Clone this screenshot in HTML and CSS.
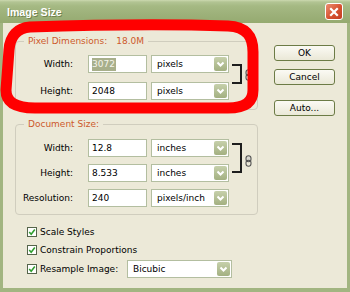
FILE: index.html
```html
<!DOCTYPE html>
<html lang="en">
<head>
<meta charset="utf-8">
<title>Image Size</title>
<link rel="stylesheet" href="styles.css">
</head>
<body>
<div class="window">
  <div class="titlebar">
    <span class="title">Image Size</span>
    <span class="close"><svg width="10" height="10" viewBox="0 0 10 10"><path d="M2 2L8 8M8 2L2 8" stroke="#fff" stroke-width="2.2" stroke-linecap="square" fill="none"/></svg></span>
  </div>
  <div class="frame">
    <div class="main">
      <fieldset class="group g1">
        <legend>Pixel Dimensions:<span class="mp">18.0M</span></legend>
        <div class="gbody">
          <div class="rows">
            <div class="row"><span class="lbl">Width:</span><div class="field"><span class="hl">3072</span></div><div class="combo"><span>pixels</span><span class="drop"><svg width="9" height="7" viewBox="0 0 9 7"><path d="M1.5 1.5L4.5 4.5L7.5 1.5" stroke="#fff" stroke-width="2" fill="none"/></svg></span></div></div>
            <div class="row"><span class="lbl">Height:</span><div class="field"><span>2048</span></div><div class="combo"><span>pixels</span><span class="drop"><svg width="9" height="7" viewBox="0 0 9 7"><path d="M1.5 1.5L4.5 4.5L7.5 1.5" stroke="#fff" stroke-width="2" fill="none"/></svg></span></div></div>
          </div>
          <div class="link">
            <span class="bracket"></span>
            <svg class="chain" width="7" height="12" viewBox="0 0 7 12"><rect x="1" y="0.7" width="5" height="6" rx="2.5" fill="#d8d8d0" stroke="#555" stroke-width="1.1"/><rect x="1" y="5.3" width="5" height="6" rx="2.5" fill="none" stroke="#555" stroke-width="1.1"/></svg>
          </div>
        </div>
      </fieldset>
      <fieldset class="group g2">
        <legend>Document Size:</legend>
        <div class="gbody">
          <div class="rows">
            <div class="row"><span class="lbl">Width:</span><div class="field"><span>12.8</span></div><div class="combo"><span>inches</span><span class="drop"><svg width="9" height="7" viewBox="0 0 9 7"><path d="M1.5 1.5L4.5 4.5L7.5 1.5" stroke="#fff" stroke-width="2" fill="none"/></svg></span></div></div>
            <div class="row"><span class="lbl">Height:</span><div class="field"><span>8.533</span></div><div class="combo"><span>inches</span><span class="drop"><svg width="9" height="7" viewBox="0 0 9 7"><path d="M1.5 1.5L4.5 4.5L7.5 1.5" stroke="#fff" stroke-width="2" fill="none"/></svg></span></div></div>
            <div class="row"><span class="lbl">Resolution:</span><div class="field"><span>240</span></div><div class="combo"><span>pixels/inch</span><span class="drop"><svg width="9" height="7" viewBox="0 0 9 7"><path d="M1.5 1.5L4.5 4.5L7.5 1.5" stroke="#fff" stroke-width="2" fill="none"/></svg></span></div></div>
          </div>
          <div class="link">
            <span class="bracket"></span>
            <svg class="chain" width="7" height="12" viewBox="0 0 7 12"><rect x="1" y="0.7" width="5" height="6" rx="2.5" fill="#d8d8d0" stroke="#555" stroke-width="1.1"/><rect x="1" y="5.3" width="5" height="6" rx="2.5" fill="none" stroke="#555" stroke-width="1.1"/></svg>
          </div>
        </div>
      </fieldset>
      <div class="checks">
        <div class="check"><span class="box"><svg width="8" height="8" viewBox="0 0 8 8"><path d="M1.2 4L3.2 6.2L6.8 1.6" stroke="#2f9e2f" stroke-width="1.6" fill="none"/></svg></span><span>Scale Styles</span></div>
        <div class="check"><span class="box"><svg width="8" height="8" viewBox="0 0 8 8"><path d="M1.2 4L3.2 6.2L6.8 1.6" stroke="#2f9e2f" stroke-width="1.6" fill="none"/></svg></span><span>Constrain Proportions</span></div>
        <div class="check resample"><span class="box"><svg width="8" height="8" viewBox="0 0 8 8"><path d="M1.2 4L3.2 6.2L6.8 1.6" stroke="#2f9e2f" stroke-width="1.6" fill="none"/></svg></span><span class="rlabel">Resample Image:</span><div class="combo wide"><span>Bicubic</span><span class="drop"><svg width="9" height="7" viewBox="0 0 9 7"><path d="M1.5 1.5L4.5 4.5L7.5 1.5" stroke="#fff" stroke-width="2" fill="none"/></svg></span></div></div>
      </div>
    </div>
    <div class="buttons">
      <div class="btn ok">OK</div>
      <div class="btn cancel">Cancel</div>
      <div class="btn auto">Auto...</div>
    </div>
  </div>
</div>
<svg class="annot" width="350" height="292" viewBox="0 0 350 292">
  <path d="M30 27 C90 25 170 24 228 26 C248 27 253 38 253 52 L253 90 C253 102 245 108 228 108 L35 108 C15 108 6 102 6 90 L9 50 C10 35 18 28 30 27 Z" fill="none" stroke="#ff0000" stroke-width="11" stroke-linejoin="round"/>
</svg>
</body>
</html>
```
FILE: styles.css
```css
body {
  margin: 0;
  width: 350px;
  height: 292px;
  position: relative;
  overflow: hidden;
  font-family: "DejaVu Sans", sans-serif;
  font-size: 9px;
  color: #000;
  background: #ECE9D8;
}

.window {
  display: flex;
  flex-direction: column;
  width: 350px;
  height: 292px;
}

.titlebar {
  height: 23px;
  flex: none;
  display: flex;
  align-items: center;
  justify-content: space-between;
  padding: 0 7px 0 7px;
  background: linear-gradient(#CCD9B0 0, #B2C493 2px, #A5B983 6px, #9DB17A 14px, #95AA70 23px);
}

.title {
  font-family: "Liberation Sans", Arial, sans-serif;
  font-weight: bold;
  font-size: 10.6px;
  color: #fff;
  text-shadow: 1px 1px 0 #72834F;
}

.close {
  width: 18px;
  height: 17px;
  box-sizing: border-box;
  border: 1px solid #fff;
  border-radius: 3px;
  background: linear-gradient(135deg, #EC8E72, #D6512F 55%, #C43E24);
  display: flex;
  align-items: center;
  justify-content: center;
}

.frame {
  flex: 1;
  display: flex;
  background: #ECE9D8;
  border: solid #A2B581;
  border-width: 0 3px 4px;
  padding: 12px 12px 0;
}

.main {
  width: 243px;
  flex: none;
}

.group {
  margin: 0;
  width: 243px;
  box-sizing: border-box;
  min-width: 0;
  padding: 8px 4px 9px;
  border: 1px solid #D0CDBE;
  border-radius: 4px;
}

.g2 {
  margin-top: 8px;
  padding-top: 9px;
  padding-bottom: 7px;
}

legend {
  font-size: 9px;
  line-height: 12px;
  color: #CD5A2C;
  padding: 0 4px;
  margin-left: 4px;
}

.mp {
  margin-left: 9px;
}

.gbody {
  display: flex;
}

.rows {
  display: flex;
  flex-direction: column;
  gap: 9px;
}

.g2 .rows {
  gap: 7px;
}

.row {
  display: flex;
  align-items: center;
  height: 18px;
}

.lbl {
  width: 53px;
  text-align: right;
}

.field {
  margin-left: 15px;
  width: 59px;
  height: 18px;
  box-sizing: border-box;
  border: 1px solid #B3BEA0;
  background: #fff;
  padding-left: 3px;
  display: flex;
  align-items: center;
}

.hl {
  background: #A8AF8B;
  color: #F4F4EC;
  line-height: 13px;
  padding: 0 1px 0 0;
}

.combo {
  margin-left: 4px;
  width: 78px;
  height: 18px;
  box-sizing: border-box;
  border: 1px solid #B3BEA0;
  background: #fff;
  display: flex;
  align-items: center;
  justify-content: space-between;
  padding: 0 1px 0 5px;
}

.drop {
  width: 13px;
  height: 14px;
  border-radius: 2px;
  background: linear-gradient(#C6D0AB, #A3B081);
  display: flex;
  align-items: center;
  justify-content: center;
}

.link {
  display: flex;
  align-items: flex-start;
  margin-left: 3px;
}

.bracket {
  width: 10px;
  box-sizing: border-box;
  border: 2px solid #1E1E1E;
  border-left: 0;
}

.g1 .bracket {
  margin-top: 9px;
  height: 20px;
}

.g2 .bracket {
  margin-top: 4px;
  height: 30px;
}

.chain {
  margin-left: 3px;
}

.g1 .chain {
  margin-top: 14px;
}

.g2 .chain {
  margin-top: 16px;
}

.checks {
  margin-left: 12px;
  margin-top: 10px;
  display: flex;
  flex-direction: column;
}

.check {
  display: flex;
  align-items: center;
  height: 14px;
}

.check + .check {
  margin-top: 4px;
}

.check.resample {
  height: 18px;
  margin-top: 3px;
}

.box {
  width: 10px;
  height: 10px;
  box-sizing: border-box;
  border: 1px solid #55654A;
  background: #fff;
  margin-right: 3px;
  display: flex;
  align-items: center;
  justify-content: center;
}

.rlabel {
  width: 87px;
}

.combo.wide {
  margin-left: 0;
  width: 105px;
}

.buttons {
  width: 61px;
  flex: none;
  margin-left: 16px;
  display: flex;
  flex-direction: column;
}

.btn {
  height: 16px;
  box-sizing: border-box;
  border: 1px solid #6C7B46;
  border-radius: 3px;
  background: linear-gradient(#FBFAF4, #EAE8D7);
  display: flex;
  align-items: center;
  justify-content: center;
}

.ok {
  margin-top: 10px;
}

.cancel {
  margin-top: 8px;
}

.auto {
  margin-top: 15px;
}

.annot {
  position: absolute;
  left: 0;
  top: 0;
  pointer-events: none;
}
```
